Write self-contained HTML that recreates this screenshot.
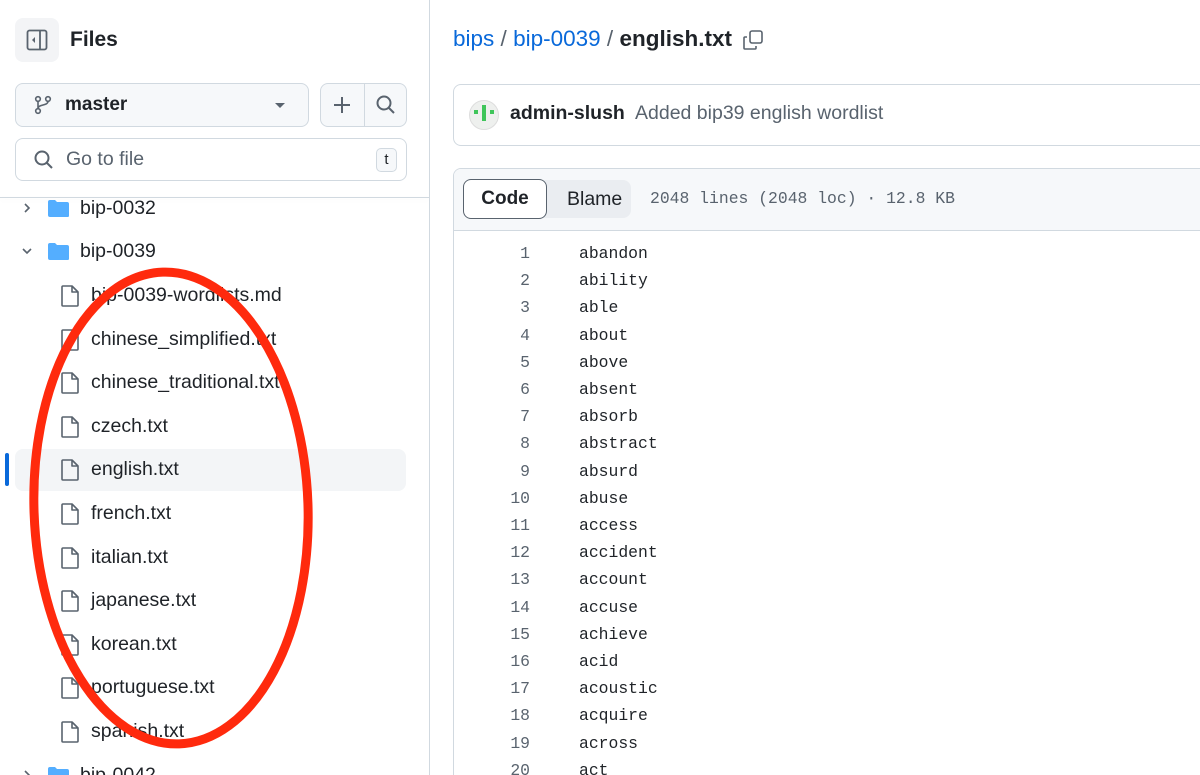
<!DOCTYPE html>
<html><head><meta charset="utf-8"><style>
*{box-sizing:border-box;margin:0;padding:0}
html,body{width:1200px;height:775px;overflow:hidden}
body{background:#fff;font-family:"Liberation Sans",sans-serif;color:#1f2328;position:relative}
.abs{position:absolute}
.side{left:0;top:0;width:430px;height:775px;border-right:1px solid #d1d9e0;background:#fff}
.btn{border:1px solid #d1d9e0;border-radius:8px;background:#f6f8fa}
.row{position:absolute;left:15px;width:391px;height:42px;font-size:19.5px;line-height:42px;white-space:nowrap}
.row .t{position:absolute;left:76px}
.row svg{position:absolute;left:46px;top:11px}
.mono{font-family:"Liberation Mono",monospace}
.ln{position:absolute;width:80px;left:450px;text-align:right;color:#59636e;font-size:16.4px}
.cd{position:absolute;left:579px;font-size:16.4px;color:#1f2328}
</style></head><body>
<div class="abs side">
 <div class="abs" style="left:15px;top:18px;width:44px;height:44px;border-radius:8px;background:#f3f4f6"></div>
 <svg class="abs" style="left:26px;top:29px" width="22" height="22" viewBox="0 0 22 22"><rect x="1.5" y="1.5" width="19" height="19" rx="2" fill="none" stroke="#59636e" stroke-width="1.8"/><line x1="14" y1="2" x2="14" y2="20" stroke="#59636e" stroke-width="1.8"/><path d="M9 8 L6 11 L9 14Z" fill="#59636e"/></svg>
 <div class="abs" style="left:70px;top:28px;font-size:21px;font-weight:bold">Files</div>
 <div class="abs btn" style="left:15px;top:83px;width:294px;height:44px"></div>
 <svg class="abs" style="left:34px;top:95px" width="18" height="20" viewBox="0 0 18 20"><circle cx="4" cy="4" r="2.3" fill="none" stroke="#59636e" stroke-width="1.6"/><circle cx="4" cy="16" r="2.3" fill="none" stroke="#59636e" stroke-width="1.6"/><circle cx="14" cy="4" r="2.3" fill="none" stroke="#59636e" stroke-width="1.6"/><path d="M4 6.3V13.7M14 6.3C14 11 4 9 4 13.7" fill="none" stroke="#59636e" stroke-width="1.6"/></svg>
 <div class="abs" style="left:65px;top:94px;font-size:19px;font-weight:bold;color:#1f2328">master</div>
 <div class="abs" style="left:275px;top:103px;width:0;height:0;border-left:5px solid transparent;border-right:5px solid transparent;border-top:5px solid #59636e"></div>
 <div class="abs btn" style="left:320px;top:83px;width:87px;height:44px"></div>
 <div class="abs" style="left:364px;top:84px;width:1px;height:42px;background:#d1d9e0"></div>
 <svg class="abs" style="left:332px;top:95px" width="20" height="20"><path d="M10 2V18M2 10H18" stroke="#59636e" stroke-width="2"/></svg>
 <svg class="abs" style="left:375px;top:94px" width="22" height="22"><circle cx="9" cy="9" r="6.5" fill="none" stroke="#59636e" stroke-width="2"/><path d="M14 14L19 19" stroke="#59636e" stroke-width="2"/></svg>
 <div class="abs" style="left:15px;top:138px;width:392px;height:43px;border:1px solid #d1d9e0;border-radius:8px;background:#fff"></div>
 <svg class="abs" style="left:33px;top:149px" width="22" height="22"><circle cx="9" cy="9" r="6.5" fill="none" stroke="#59636e" stroke-width="2"/><path d="M14 14L19 19" stroke="#59636e" stroke-width="2"/></svg>
 <div class="abs" style="left:66px;top:148px;font-size:19.5px;color:#59636e">Go to file</div>
 <div class="abs" style="left:376px;top:148px;width:21px;height:24px;border:1px solid #d1d9e0;border-radius:5px;background:#f6f8fa;font-size:15px;text-align:center;line-height:21px;color:#1f2328">t</div>
 <div class="abs" style="left:0;top:197px;width:429px;height:1px;background:#d1d9e0;box-shadow:0 2px 6px rgba(0,0,0,.06)"></div>

 <div class="row" style="top:187px"><svg style="left:6px;top:15px" width="12" height="12"><path d="M4 2L8 6L4 10" fill="none" stroke="#59636e" stroke-width="1.6"/></svg><svg style="left:32px;top:12px" width="23" height="19"><path d="M1 3Q1 1 3 1H8L10 3H20Q22 3 22 5V17Q22 18 20 18H3Q1 18 1 16Z" fill="#54aeff"/></svg><span class="t" style="left:65px">bip-0032</span></div>
 <div class="row" style="top:230px"><svg style="left:6px;top:15px" width="12" height="12"><path d="M2 4L6 8L10 4" fill="none" stroke="#59636e" stroke-width="1.6"/></svg><svg style="left:32px;top:12px" width="23" height="19"><path d="M1 3Q1 1 3 1H8L10 3H20Q22 3 22 5V17Q22 18 20 18H3Q1 18 1 16Z" fill="#54aeff"/></svg><span class="t" style="left:65px">bip-0039</span></div>

 <div class="abs" style="left:15px;top:449px;width:391px;height:42px;border-radius:8px;background:#f3f5f7"></div>
 <div class="abs" style="left:5px;top:453px;width:4px;height:33px;border-radius:2px;background:#0969da"></div>
 <div id="files"></div>
</div>
<div class="abs" style="left:453px;top:26px;font-size:22.5px;white-space:nowrap"><span style="color:#0969da">bips</span> <span style="color:#59636e">/</span> <span style="color:#0969da">bip-0039</span> <span style="color:#59636e">/</span> <b>english.txt</b></div>
<svg class="abs" style="left:742px;top:29px" width="22" height="22" viewBox="0 0 22 22"><rect x="8" y="2" width="12" height="12" rx="2" fill="none" stroke="#59636e" stroke-width="1.6"/><path d="M5 8H3Q2 8 2 9V19Q2 20 3 20H13Q14 20 14 19V17" fill="none" stroke="#59636e" stroke-width="1.6"/></svg>
<div class="abs" style="left:453px;top:84px;width:760px;height:62px;border:1px solid #d1d9e0;border-radius:8px"></div>
<div class="abs" style="left:469px;top:100px;width:30px;height:30px;border-radius:50%;background:#eef0ee;border:1px solid #ddd"></div>
<div class="abs" style="left:482px;top:105px;width:4px;height:16px;background:#3fc55a"></div>
<div class="abs" style="left:474px;top:110px;width:4px;height:4px;background:#3fc55a"></div>
<div class="abs" style="left:490px;top:110px;width:4px;height:4px;background:#3fc55a"></div>
<div class="abs" style="left:510px;top:102px;font-size:19.5px;font-weight:bold">admin-slush</div>
<div class="abs" style="left:635px;top:102px;font-size:19.5px;color:#59636e">Added bip39 english wordlist</div>
<div class="abs" style="left:453px;top:168px;width:760px;height:620px;border:1px solid #d1d9e0;border-radius:8px;overflow:hidden">
 <div style="height:62px;background:#f6f8fa;border-bottom:1px solid #d1d9e0"></div>
</div>
<div class="abs" style="left:463px;top:180px;width:168px;height:38px;border-radius:8px;background:#eaedf1"></div>
<div class="abs" style="left:463px;top:179px;width:84px;height:40px;border:1px solid #59636e;border-radius:8px;background:#fff;font-size:19px;font-weight:bold;text-align:center;line-height:38px">Code</div>
<div class="abs" style="left:567px;top:188px;font-size:19.5px">Blame</div>
<div class="abs mono" style="left:650px;top:189px;font-size:16.4px;color:#59636e;white-space:nowrap">2048 lines (2048 loc) · 12.8 KB</div>
<div id="code"></div>
<svg class="abs" style="left:0;top:0" width="1200" height="775"><ellipse cx="171" cy="508" rx="137" ry="236" fill="none" stroke="#ff2a0d" stroke-width="9" transform="rotate(-2 171 508)"/></svg>
<script>
var n=["bip-0039-wordlists.md","chinese_simplified.txt","chinese_traditional.txt","czech.txt","english.txt","french.txt","italian.txt","japanese.txt","korean.txt","portuguese.txt","spanish.txt"];
var h="";n.forEach(function(s,i){var y=274+i*43.6;h+='<div class="row" style="top:'+y+'px"><svg width="18" height="22" viewBox="0 0 18 22"><path d="M2 1H11L17 7V20Q17 21 16 21H2Q1 21 1 20V2Q1 1 2 1ZM11 1V7H17" fill="none" stroke="#59636e" stroke-width="1.6" stroke-linejoin="round"/></svg><span class="t">'+s+'</span></div>';});
h+='<div class="row" style="top:754px"><svg style="left:6px;top:15px" width="12" height="12"><path d="M4 2L8 6L4 10" fill="none" stroke="#59636e" stroke-width="1.6"/></svg><svg style="left:32px;top:12px" width="23" height="19"><path d="M1 3Q1 1 3 1H8L10 3H20Q22 3 22 5V17Q22 18 20 18H3Q1 18 1 16Z" fill="#54aeff"/></svg><span class="t" style="left:65px">bip-0042</span></div>';
document.getElementById("files").innerHTML=h;
var w=["abandon","ability","able","about","above","absent","absorb","abstract","absurd","abuse","access","accident","account","accuse","achieve","acid","acoustic","acquire","across","act"];
var c="";w.forEach(function(s,i){var y=244+i*27.2;c+='<div class="ln mono" style="top:'+y+'px">'+(i+1)+'</div><div class="cd mono" style="top:'+y+'px">'+s+'</div>';});
document.getElementById("code").innerHTML=c;
</script>
</body></html>
